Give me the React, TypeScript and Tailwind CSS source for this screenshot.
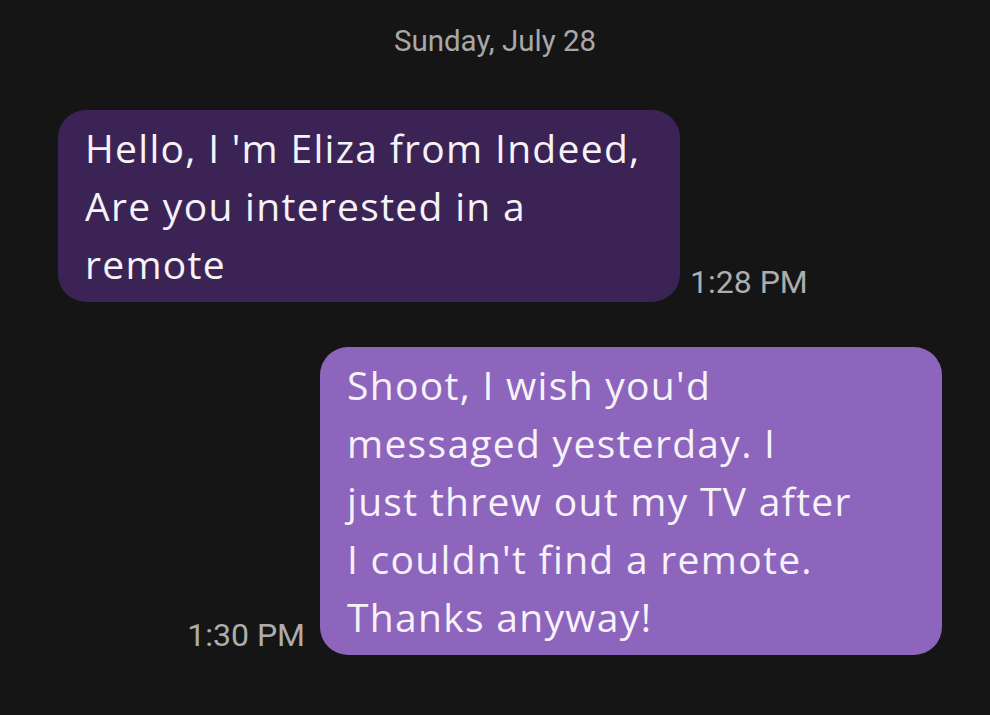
const bubbleText =
  "text-[39px] leading-[58px] tracking-[1.3px] text-[#f6f2f8] font-['Open_Sans',sans-serif]";

export default function App() {
  return (
    <div
      className="w-full h-[715px] bg-[#151515] overflow-hidden"
      style={{ fontFamily: "Roboto, 'Noto Sans', sans-serif" }}
    >
      <div className="pt-[24px] text-center text-[29.5px] leading-[34px] text-[#a8a8a8]">
        Sunday, July 28
      </div>

      <div className="mt-[52px] flex items-end pl-[58px]">
        <div
          className={`w-[622px] rounded-[28px] bg-[#3b2455] px-[27px] py-[9px] ${bubbleText}`}
        >
          Hello, I 'm Eliza from Indeed,
          <br />
          Are you interested in a
          <br />
          remote
        </div>
        <span className="ml-[10px] mb-[2px] text-[32px] leading-[36px] text-[#adadad]">
          1:28 PM
        </span>
      </div>

      <div className="mt-[45px] flex items-end justify-end pr-[48px]">
        <span className="mr-[15px] mb-[2px] text-[32px] leading-[36px] text-[#adadad]">
          1:30 PM
        </span>
        <div
          className={`w-[622px] rounded-[28px] bg-[#8d65bd] px-[27px] py-[9px] ${bubbleText}`}
        >
          Shoot, I wish you'd
          <br />
          messaged yesterday. I
          <br />
          just threw out my TV after
          <br />
          I couldn't find a remote.
          <br />
          Thanks anyway!
        </div>
      </div>
    </div>
  );
}
